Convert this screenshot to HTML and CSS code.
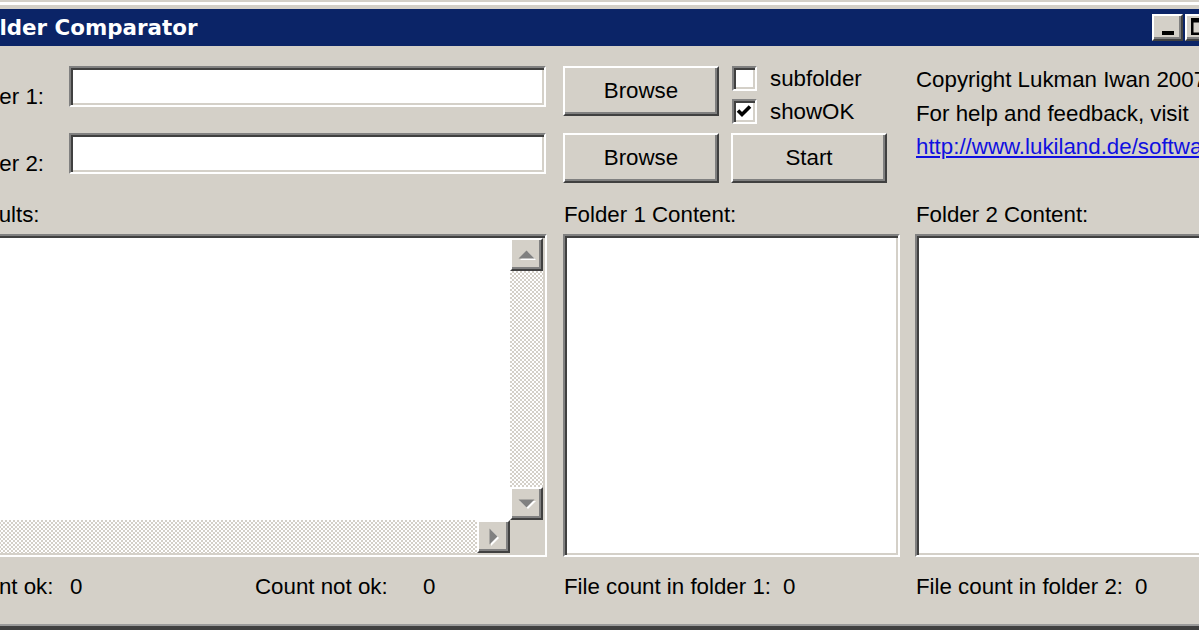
FILE: index.html
```html
<!DOCTYPE html>
<html lang="en">
<head>
    <meta charset="UTF-8">
    <meta name="viewport" content="width=device-width, initial-scale=1.0">
    <title>Folder Comparator</title>
    <link rel="stylesheet" href="styles.css">
</head>
<body>
    <div class="window">
        <div class="titlebar">
            <span class="title">Folder Comparator</span>
            <div class="caption-buttons">
                <button class="cap-btn raised">
                    <svg width="27" height="23" viewBox="0 0 27 23"><rect x="8" y="15" width="12" height="4" fill="#000"/></svg>
                </button>
                <button class="cap-btn raised">
                    <svg width="27" height="23" viewBox="0 0 27 23"><path d="M4 2h17v17H4z M6.5 6.5v10h12v-10z" fill="#000" fill-rule="evenodd"/></svg>
                </button>
                <button class="cap-btn raised close">
                    <svg width="27" height="23" viewBox="0 0 27 23"><path d="M7 4l13 13M20 4L7 17" stroke="#000" stroke-width="3"/></svg>
                </button>
            </div>
        </div>

        <div class="client">
            <div class="top-row">
                <div class="paths">
                    <label class="field-label">Folder 1:</label>
                    <input class="textbox sunken" type="text">
                    <label class="field-label">Folder 2:</label>
                    <input class="textbox sunken" type="text">
                </div>

                <div class="actions">
                    <button class="btn raised">Browse</button>
                    <div class="options">
                        <label class="check"><span class="box sunken"></span>subfolder</label>
                        <label class="check">
                            <span class="box sunken">
                                <svg width="21" height="21" viewBox="0 0 21 21"><path d="M4 9.5l4 4 8-8" fill="none" stroke="#000" stroke-width="3.6"/></svg>
                            </span>showOK
                        </label>
                    </div>
                    <button class="btn raised">Browse</button>
                    <button class="btn raised">Start</button>
                </div>

                <div class="about">
                    <div>Copyright Lukman Iwan 2007</div>
                    <div>For help and feedback, visit</div>
                    <a href="#">http://www.lukiland.de/software</a>
                </div>
            </div>

            <div class="lists">
                <div class="pane results">
                    <div class="pane-label">Results:</div>
                    <div class="listbox sunken with-scroll">
                        <div class="list-area"></div>
                        <div class="vscroll">
                            <div class="sb-btn raised">
                                <svg width="29" height="29" viewBox="0 0 29 29"><path d="M16 12l8 8H8z" fill="#fff"/><path d="M14.5 10.5l8 8h-16z" fill="#808080"/></svg>
                            </div>
                            <div class="sb-track"></div>
                            <div class="sb-btn raised">
                                <svg width="29" height="29" viewBox="0 0 29 29"><path d="M16 20l8-8H8z" fill="#fff"/><path d="M14.5 18.5l8-8h-16z" fill="#808080"/></svg>
                            </div>
                        </div>
                        <div class="hscroll">
                            <div class="sb-btn raised">
                                <svg width="29" height="29" viewBox="0 0 29 29"><path d="M12 16l8-8v16z" fill="#fff"/><path d="M10.5 14.5l8-8v16z" fill="#808080"/></svg>
                            </div>
                            <div class="sb-track"></div>
                            <div class="sb-btn raised">
                                <svg width="29" height="29" viewBox="0 0 29 29"><path d="M20 16l-8-8v16z" fill="#fff"/><path d="M18.5 14.5l-8-8v16z" fill="#808080"/></svg>
                            </div>
                        </div>
                        <div class="sb-corner"></div>
                    </div>
                </div>

                <div class="pane folder1">
                    <div class="pane-label">Folder 1 Content:</div>
                    <div class="listbox sunken"></div>
                </div>

                <div class="pane folder2">
                    <div class="pane-label">Folder 2 Content:</div>
                    <div class="listbox sunken"></div>
                </div>
            </div>

            <div class="stats">
                <div class="stats-results">
                    <div class="stat stat-ok"><span class="stat-name">Count ok:</span><span>0</span></div>
                    <div class="stat stat-notok"><span class="stat-name">Count not ok:</span><span>0</span></div>
                </div>
                <div class="stat folder1"><span class="stat-name">File count in folder 1:</span><span class="stat-value">0</span></div>
                <div class="stat folder2"><span class="stat-name">File count in folder 2:</span><span class="stat-value">0</span></div>
            </div>
        </div>
    </div>
</body>
</html>
```

FILE: styles.css
```css
body {
    margin: 0;
    overflow: hidden;
    background-color: #d4d0c8;
    font-family: 'Liberation Sans', Arial, sans-serif;
    font-size: 22.3px;
    color: #000;
}
.window {
    width: 1310px;
    margin-left: -52px;
    margin-top: 2px;
    padding-top: 4px;
    border-top: 3px solid #fff;
    border-bottom: 4px solid #404040;
}
.raised {
    background: #d4d0c8;
    border: 2px solid;
    border-color: #fff #404040 #404040 #fff;
    box-shadow: inset -2px -2px 0 #808080;
    box-sizing: border-box;
}
.sunken {
    background: #fff;
    border: 2px solid;
    border-color: #808080 #fff #fff #808080;
    box-shadow: inset 2px 2px 0 #404040, inset -2px -2px 0 #d4d0c8;
    box-sizing: border-box;
}

/* title bar */
.titlebar {
    height: 37px;
    background: #0b2467;
    display: flex;
    align-items: center;
    justify-content: space-between;
    padding: 0 7px 0 23px;
}
.title {
    color: #fff;
    font-family: 'DejaVu Sans', Verdana, sans-serif;
    font-weight: bold;
    font-size: 21.4px;
}
.caption-buttons {
    display: flex;
    gap: 2px;
}
.cap-btn {
    width: 31px;
    height: 27px;
    padding: 0;
    display: flex;
    align-items: center;
    justify-content: center;
}
.cap-btn.close {
    margin-left: 2px;
}

/* client area */
.client {
    box-sizing: border-box;
    height: 580px;
    padding: 20px 0 0 10px;
    border-bottom: 2px solid #9a9a9a;
}
.top-row {
    display: flex;
    align-items: flex-start;
    height: 117px;
}
.paths {
    display: grid;
    grid-template-columns: 111px 477px;
    grid-template-rows: 50px 50px;
    row-gap: 17px;
}
.field-label {
    padding-top: 18px;
    margin-left: -2px;
    white-space: nowrap;
}
.textbox {
    height: 41px;
    width: 477px;
    margin: 0;
    outline: none;
}
.actions {
    margin-left: 17px;
    display: grid;
    grid-template-columns: 156px 156px;
    grid-template-rows: 50px 50px;
    column-gap: 12px;
    row-gap: 17px;
}
.btn {
    font-family: inherit;
    font-size: inherit;
    color: #000;
    height: 50px;
    padding: 0;
}
.options {
    display: flex;
    flex-direction: column;
    gap: 8px;
    padding-left: 1px;
}
.check {
    display: flex;
    align-items: center;
    gap: 13px;
    height: 25px;
    white-space: nowrap;
}
.box {
    width: 25px;
    height: 25px;
    display: flex;
    align-items: center;
    justify-content: center;
}
.about {
    margin-left: 29px;
    margin-top: -3px;
    line-height: 33.5px;
    white-space: nowrap;
}
.about a {
    color: #1010e0;
}

/* list panes */
.lists {
    display: flex;
    margin-top: 19px;
}
.pane-label {
    height: 25px;
    line-height: 25px;
    margin-bottom: 7px;
    padding-left: 1px;
    white-space: nowrap;
}
.listbox {
    height: 323px;
}
.results {
    width: 589px;
}
.folder1 {
    width: 337px;
    margin-left: 16px;
}
.folder2 {
    width: 337px;
    margin-left: 15px;
}
.with-scroll {
    display: grid;
    grid-template-columns: 1fr 33px;
    grid-template-rows: 1fr 33px;
    padding: 2px;
}
.vscroll {
    display: flex;
    flex-direction: column;
}
.hscroll {
    display: flex;
}
.sb-btn {
    width: 33px;
    height: 33px;
    flex: none;
    display: flex;
    align-items: center;
    justify-content: center;
}
.sb-track {
    flex: 1;
    background: repeating-conic-gradient(#d4d0c8 0% 25%, #fff 0% 50%) 0 0 / 4px 4px;
}
.sb-corner {
    background: #d4d0c8;
}

/* counters */
.stats {
    display: flex;
    margin-top: 17px;
    line-height: 25px;
    white-space: nowrap;
}
.stats-results {
    width: 589px;
    display: flex;
}
.stat-ok {
    width: 297px;
}
.stat-ok .stat-name {
    display: inline-block;
    width: 112px;
}
.stat-notok .stat-name {
    display: inline-block;
    width: 168px;
}
.stat-value {
    margin-left: 12px;
}
.stats .folder1 {
    padding-left: 1px;
}
```
